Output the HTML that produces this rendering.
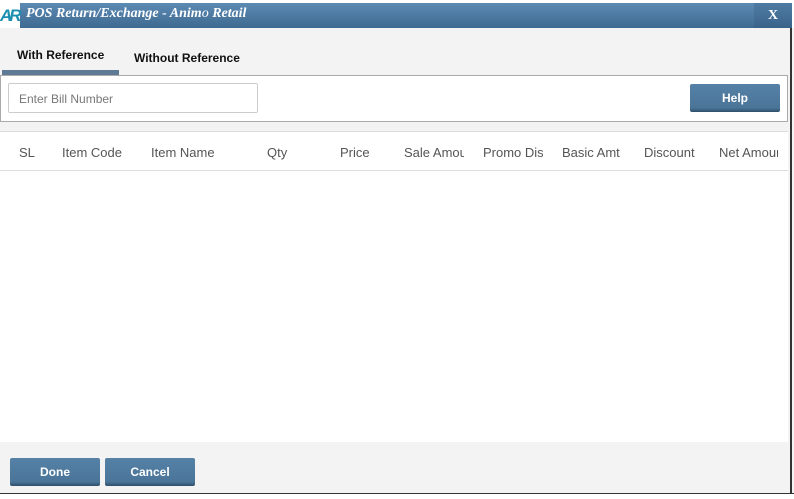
<!DOCTYPE html>
<html><head><style>
body{margin:0;width:794px;height:499px;overflow:hidden;background:#f3f3f3;font-family:"Liberation Sans",sans-serif;position:relative}
div{position:absolute;box-sizing:border-box}
.btn{background:linear-gradient(#5681a6,#4a7599 85%,#2f4f6a);color:#fff;font-weight:bold;font-size:12px;text-align:center;border-radius:2px}
.h{top:145px;font-size:13px;color:#555}
</style></head><body>
<div style="left:0;top:0;width:794px;height:28px;background:#fff"></div>
<div style="left:20px;top:3px;width:734px;height:25px;background:linear-gradient(#5b8ab3,#3f6a91)"></div>
<div style="left:754px;top:3px;width:38px;height:25px;background:linear-gradient(#4f7ca4,#3a6389);color:#fff;font:bold 14px 'Liberation Serif',serif;text-align:center;line-height:25px">X</div>
<div style="left:0;top:6px;font:bold italic 17px 'Liberation Sans',sans-serif;color:#1d8fb0;letter-spacing:-3px">AR</div>
<div style="left:26px;top:6px;font:italic bold 14px 'Liberation Serif',serif;color:#fff">POS Return/Exchange - Anim<span style="font-weight:normal">o</span> Retail</div>
<div style="left:790px;top:28px;width:2px;height:465px;background:#333"></div>
<div style="left:17px;top:48px;font-size:12px;color:#111;font-weight:600">With Reference</div>
<div style="left:134px;top:51px;font-size:12px;color:#111;font-weight:600">Without Reference</div>
<div style="left:2px;top:70px;width:117px;height:5px;background:#5e7a95"></div>
<div style="left:0;top:75px;width:788px;height:47px;border:1px solid #aaa;background:#fff"></div>
<div style="left:8px;top:83px;width:250px;height:30px;border:1px solid #ccc;border-radius:2px;background:#fff;font-size:12px;color:#777;padding:8px 0 0 10px">Enter Bill Number</div>
<div class="btn" style="left:690px;top:84px;width:90px;height:28px;line-height:28px">Help</div>
<div style="left:0;top:131px;width:788px;height:311px;background:#fff;border-top:1px solid #ddd"></div>
<div style="left:0;top:170px;width:788px;height:1px;background:#ddd"></div>
<div class="h" style="left:19px">SL</div>
<div class="h" style="left:62px;width:60px;overflow:hidden;white-space:nowrap">Item Code</div>
<div class="h" style="left:151px">Item Name</div>
<div class="h" style="left:267px">Qty</div>
<div class="h" style="left:340px">Price</div>
<div class="h" style="left:404px;width:60px;overflow:hidden;white-space:nowrap">Sale Amount</div>
<div class="h" style="left:483px;width:60px;overflow:hidden;white-space:nowrap">Promo Discount</div>
<div class="h" style="left:562px">Basic Amt</div>
<div class="h" style="left:644px">Discount</div>
<div class="h" style="left:719px;width:59px;overflow:hidden;white-space:nowrap">Net Amount</div>
<div class="btn" style="left:10px;top:458px;width:90px;height:28px;line-height:28px">Done</div>
<div class="btn" style="left:105px;top:458px;width:90px;height:28px;line-height:28px">Cancel</div>
<div style="left:0;top:493px;width:794px;height:6px;background:#fff;border-top:1px solid #333"></div>
</body></html>
